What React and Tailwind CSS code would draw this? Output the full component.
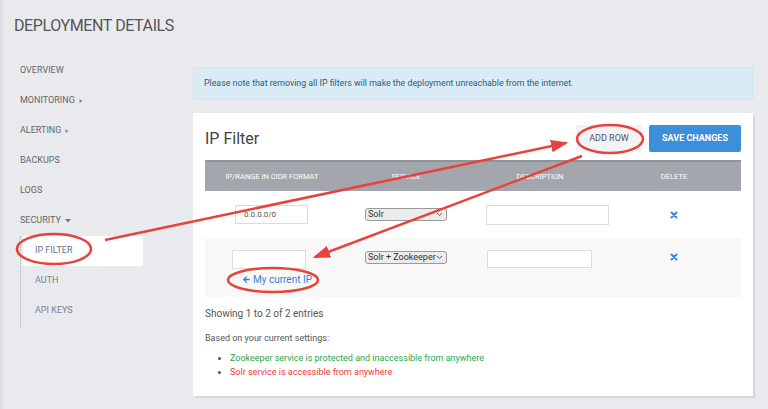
import { ArrowLeft } from 'lucide-react';

const font = { fontFamily: 'Roboto, "Liberation Sans", sans-serif' };

function Caret({ down }) {
    return down ? (
        <svg width="6" height="4" viewBox="0 0 6 4" className="ml-[4px]">
            <path d="M0 0 L6 0 L3 3.5 Z" fill="#777" />
        </svg>
    ) : (
        <svg width="4" height="6" viewBox="0 0 4 6" className="ml-[4px]">
            <path d="M0.5 1 L3.5 3 L0.5 5 Z" fill="#888" />
        </svg>
    );
}

function NativeSelect({ label }) {
    return (
        <div className="flex items-center justify-between w-[82px] h-[13px] rounded-[3px] border border-[#9a9a9a] bg-[#ececec] pl-[2px] pr-[3px] text-[9px] leading-none text-[#333]">
            <span>{label}</span>
            <svg width="7" height="5" viewBox="0 0 7 5">
                <path d="M1 1 L3.5 3.5 L6 1" stroke="#555" strokeWidth="1" fill="none" />
            </svg>
        </div>
    );
}

function DeleteX() {
    return (
        <svg width="8" height="8" viewBox="0 0 8 8">
            <path d="M1.5 1.5 L6.5 6.5 M6.5 1.5 L1.5 6.5" stroke="#3a86d8" strokeWidth="2" strokeLinecap="round" />
        </svg>
    );
}

const menu = [
    { label: 'OVERVIEW' },
    { label: 'MONITORING', caret: 'right' },
    { label: 'ALERTING', caret: 'right' },
    { label: 'BACKUPS' },
    { label: 'LOGS' },
    { label: 'SECURITY', caret: 'down' },
];

export default function App() {
    return (
        <div className="relative w-[768px] h-[409px] overflow-hidden bg-[#e9eaee] border-l-[3px] border-[#dedfe3]" style={font}>
            {/* Header */}
            <div className="h-[51px] flex items-center pl-[11px]">
                <h1 className="text-[16px] text-[#555] tracking-[-0.4px]">DEPLOYMENT DETAILS</h1>
            </div>

            <div className="flex">
                {/* Sidebar */}
                <div className="w-[190px] pt-[5px]">
                    {menu.map((m) => (
                        <div key={m.label} className="h-[30px] flex items-center pl-[17px] text-[9px] text-[#666]">
                            {m.label}
                            {m.caret && <Caret down={m.caret === 'down'} />}
                        </div>
                    ))}
                    <div className="ml-[17px] border-l border-dotted border-[#b5b6ba] pb-[2px]">
                        <div className="h-[30px] w-[120px] ml-[2px] bg-white flex items-center pl-[12px] text-[9px] text-[#6b7389]">IP FILTER</div>
                        <div className="h-[30px] flex items-center pl-[14px] text-[9px] text-[#7a8196]">AUTH</div>
                        <div className="h-[30px] flex items-center pl-[14px] text-[9px] text-[#7a8196]">API KEYS</div>
                    </div>
                </div>

                {/* Main */}
                <div className="w-[560px] pt-[16px]">
                    <div className="h-[33px] flex items-center pl-[10px] bg-[#d9ecf6] border border-[#cfe5f1] text-[8.8px] text-[#36587a]">
                        Please note that removing all IP filters will make the deployment unreachable from the internet.
                    </div>

                    <div className="mt-[13px] h-[283px] bg-white px-[12px] pt-[12px] shadow-[2px_2px_0_#d6d7db]">
                        <div className="flex items-center justify-between h-[27px]">
                            <h2 className="text-[16px] text-[#444]">IP Filter</h2>
                            <div className="flex items-center gap-[7px]">
                                <button className="h-[27px] w-[66px] bg-[#f2f3f5] text-[9px] text-[#555] rounded-[2px]">ADD ROW</button>
                                <button className="h-[27px] w-[92px] bg-[#3d8edb] text-[9px] font-bold text-white rounded-[2px]">SAVE CHANGES</button>
                            </div>
                        </div>

                        {/* Table */}
                        <div className="mt-[8px]">
                            <div className="grid grid-cols-4 h-[31px] items-center bg-[#a3a6ac] text-[7.5px] text-white text-center border-t-2 border-[#8f9297]">
                                <div>IP/RANGE IN CIDR FORMAT</div>
                                <div>SERVICE</div>
                                <div>DESCRIPTION</div>
                                <div>DELETE</div>
                            </div>

                            <div className="grid grid-cols-4 h-[47px] items-center">
                                <div className="pl-[30px]">
                                    <div className="w-[73px] h-[19px] border border-[#dcdcdc] flex items-center pl-[8px] text-[8px] text-[#555]">0.0.0.0/0</div>
                                </div>
                                <div className="pl-[26px]"><NativeSelect label="Solr" /></div>
                                <div className="pl-[13px]">
                                    <div className="w-[123px] h-[20px] border border-[#dcdcdc]" />
                                </div>
                                <div className="flex justify-center"><DeleteX /></div>
                            </div>

                            <div className="grid grid-cols-4 h-[59px] bg-[#f8f8f8] pt-[12px]">
                                <div className="pl-[27px]">
                                    <div className="w-[74px] h-[19px] border border-[#dcdcdc] bg-white" />
                                    <div className="mt-[3px] ml-[10px] flex items-center gap-[2px] text-[10px] text-[#3a7fcf]">
                                        <ArrowLeft size={9} strokeWidth={3.5} />
                                        My current IP
                                    </div>
                                </div>
                                <div className="pl-[26px] pt-[1px]"><NativeSelect label="Solr + Zookeeper" /></div>
                                <div className="pl-[14px]">
                                    <div className="w-[105px] h-[18px] border border-[#dcdcdc] bg-white" />
                                </div>
                                <div className="flex justify-center pt-[3px]"><DeleteX /></div>
                            </div>
                        </div>

                        <div className="mt-[9px] text-[10px] text-[#555]">Showing 1 to 2 of 2 entries</div>
                        <div className="mt-[11px] text-[9px] text-[#555]">Based on your current settings:</div>
                        <ul className="mt-[5px] pl-[25px] list-disc text-[9px] leading-[14px] marker:text-[#555]">
                            <li className="text-[#2aa84f]">Zookeeper service is protected and inaccessible from anywhere</li>
                            <li className="text-[#ef3b33]">Solr service is accessible from anywhere</li>
                        </ul>
                    </div>
                </div>
            </div>

            {/* Annotation overlay */}
            <svg className="absolute left-[-3px] top-0 pointer-events-none" width="768" height="409" viewBox="0 0 768 409">
                <defs>
                    <marker id="head" markerWidth="7" markerHeight="5" refX="6" refY="2.5" orient="auto" markerUnits="strokeWidth">
                        <path d="M0 0 L7 2.5 L0 5 Z" fill="#e8423d" />
                    </marker>
                </defs>
                <g fill="none" stroke="#e8423d" strokeWidth="2.5">
                    <ellipse cx="54" cy="249" rx="37" ry="15" />
                    <ellipse cx="610" cy="139" rx="33" ry="14" />
                    <ellipse cx="273" cy="280" rx="45" ry="12" />
                    <line x1="105" y1="240" x2="566" y2="143" markerEnd="url(#head)" />
                    <line x1="582" y1="156" x2="315" y2="257" markerEnd="url(#head)" />
                </g>
            </svg>
        </div>
    );
}
